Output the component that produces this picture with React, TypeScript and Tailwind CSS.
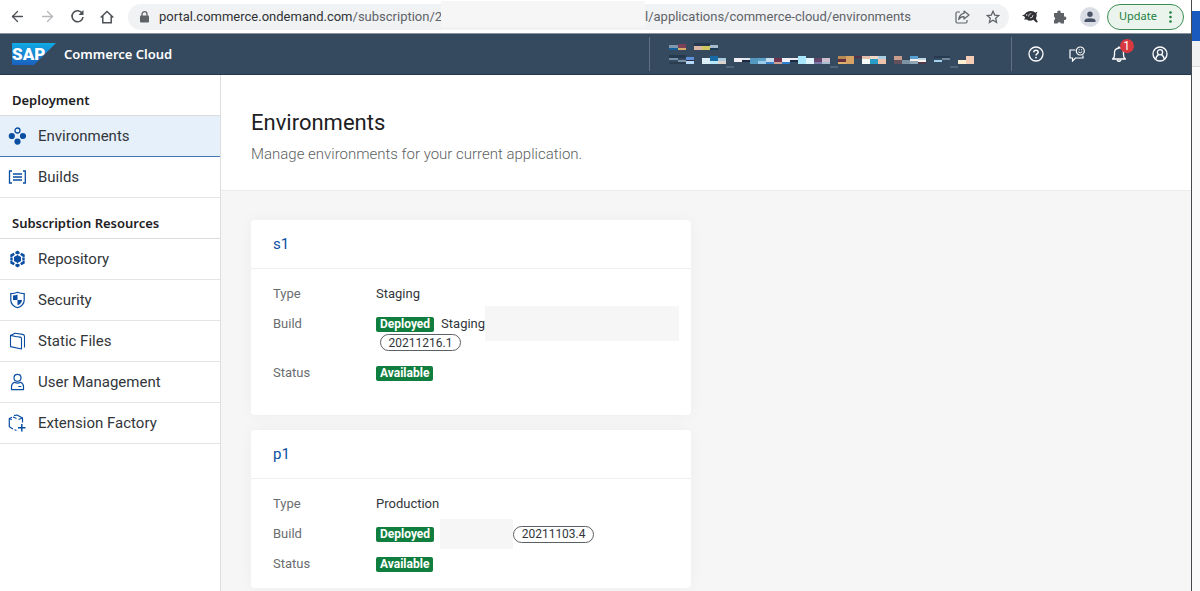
import { FunctionComponent, ReactNode } from "react";
import { ArrowLeft, ArrowRight } from "lucide-react";

interface NavItemProps {
    label: string;
    icon: ReactNode;
    active?: boolean;
}

interface EnvironmentCardProps {
    name: string;
    type: string;
    build: ReactNode;
    className?: string;
}

/* x, y, width, height, colour */
const userInfoCells: [number, number, number, number, string][] = [
    [0, 2, 9, 3, '#7f98b0'], [0, 5, 9, 2, '#12609b'],
    [9, 1, 8, 4, '#7a4259'], [9, 5, 8, 2, '#d8ac66'],
    [25, 0, 16, 3, '#24384e'], [25, 3, 8, 4, '#dcb8a8'], [33, 3, 8, 4, '#cfc95f'],
    [41, 2, 8, 3, '#a6bccb'], [41, 5, 8, 2, '#1a3a55'],
    [0, 12, 17, 3, '#24384e'], [0, 15, 9, 2, '#7790a8'], [9, 17, 8, 2, '#7790a8'], [0, 19, 17, 2, '#293c50'],
    [17, 14, 8, 3, '#5f8fd6'], [17, 17, 8, 1, '#2d2d48'], [17, 18, 8, 3, '#b5d9f7'],
    [33, 15, 8, 6, '#dceef8'], [41, 13, 8, 3, '#1769a5'], [41, 16, 8, 2, '#1769a5'], [41, 18, 8, 3, '#b9e6fb'],
    [49, 15, 8, 3, '#a9c9dc'], [49, 18, 8, 3, '#ddd3cd'], [57, 23, 8, 2, '#4f6475'],
    [65, 15, 8, 4, '#f1eef4'], [73, 15, 8, 2, '#e4e6ee'], [73, 17, 8, 2, '#1b2a43'],
    [81, 15, 8, 6, '#5598bf'], [89, 15, 8, 3, '#5aa0c8'], [89, 18, 8, 3, '#9bc9ea'],
    [97, 15, 8, 4, '#c7dcec'], [97, 19, 8, 2, '#3b82cc'], [105, 15, 8, 4, '#713551'], [105, 19, 8, 2, '#cda08f'],
    [113, 15, 8, 4, '#f0f1f6'], [113, 19, 8, 2, '#2c7fd2'], [121, 15, 8, 2, '#f0e9ef'], [121, 17, 8, 2, '#182b45'],
    [129, 13, 8, 8, '#a8e7fb'], [137, 15, 8, 6, '#e1f4fb'], [145, 15, 8, 4, '#63466b'], [145, 19, 8, 2, '#7a79aa'],
    [153, 15, 8, 4, '#cdbfd0'], [153, 19, 8, 2, '#a9bccf'], [161, 23, 8, 2, '#4f6475'],
    [169, 13, 8, 3, '#b38a52'], [169, 16, 8, 3, '#672d41'], [169, 19, 8, 2, '#e0b16c'], [177, 13, 8, 8, '#d6a365'],
    [185, 13, 8, 2, '#51324a'], [193, 13, 8, 3, '#e4bfae'], [193, 16, 8, 5, '#f4fbf8'],
    [201, 13, 8, 3, '#f3d7c7'], [201, 16, 8, 5, '#279cc4'], [209, 13, 8, 3, '#a9d0e2'], [209, 16, 8, 5, '#efc2ac'],
    [225, 13, 8, 4, '#c99d8e'], [225, 17, 8, 4, '#62505c'], [233, 17, 8, 4, '#7d94a3'],
    [241, 13, 8, 3, '#57a1d7'], [241, 16, 8, 2, '#f5f0e9'], [241, 18, 8, 3, '#91a8b8'],
    [249, 15, 8, 2, '#bfd6e4'], [249, 17, 8, 2, '#f9f2ed'], [249, 19, 8, 2, '#52384b'],
    [265, 13, 16, 2, '#263a50'], [265, 17, 8, 2, '#9ed2ef'], [273, 15, 8, 2, '#70869a'], [281, 23, 8, 2, '#4f6475'],
    [289, 17, 8, 4, '#fceed1'], [297, 13, 8, 8, '#f3cdb8'],
];

const EnvironmentsIcon = () => <svg width="18" height="18" viewBox="0 0 18 18" fill="#0a4ea2" aria-hidden="true">
    <circle cx="9.500" cy="3.500" r="2.500" fill="none" stroke="#0a4ea2" strokeWidth="1.300" />
    <circle cx="3.800" cy="9" r="3.100" />
    <circle cx="15" cy="9" r="3.100" />
    <circle cx="9.500" cy="14.600" r="3.100" />
</svg>

const BuildsIcon = () => <svg width="18" height="18" viewBox="0 0 18 18" fill="none" stroke="#0a4ea2" strokeWidth="1.300" aria-hidden="true">
    <path d="M4 3H1.500V15H4M15 3h2.300v12H15" />
    <path d="M5 6h9M5 9h9M5 12h9" strokeWidth="1.600" />
</svg>

const RepositoryIcon = () => <svg width="18" height="18" viewBox="0 0 18 18" fill="#0a4ea2" aria-hidden="true">
    <path d="M9.500 5l3.500 2v4l-3.500 2L6 11V7z" />
    <path d="M7.300 2l2.200-1.500L11.700 2v1.600l-2.200.9-2.200-.9zM7.300 16l2.200 1.500 2.200-1.500v-1.600l-2.200-.9-2.200.9z" />
    <path d="M2.300 4.400l3.300-1.700 1.300 2-3.300 2.600-1.300-.3zM16.700 4.400l-3.300-1.700-1.300 2 3.300 2.600 1.300-.3zM2.300 13.600l3.300 1.700 1.300-2-3.300-2.600-1.300.3zM16.700 13.600l-3.300 1.700-1.300-2 3.300-2.600 1.300.3z" />
    <path d="M2.300 7.600h2.400v2.800H2.300zM14.300 7.600h2.400v2.800h-2.400z" />
</svg>

const SecurityIcon = () => <svg width="18" height="18" viewBox="0 0 18 18" aria-hidden="true">
    <path d="M9.500 1.200c2 1 4.300 1.400 6.700 1.400V9c0 4-3 6.500-6.700 7.700C5.800 15.500 2.800 13 2.800 9V2.600C5.200 2.600 7.500 2.200 9.500 1.200z" fill="none" stroke="#0a4ea2" strokeWidth="1.200" />
    <path d="M5 4.500C6.500 4.400 8.200 4 9.500 3.500V9H5zM9.500 9H14c0 2.600-2 4.300-4.500 5.300z" fill="#0a4ea2" />
</svg>

const FilesIcon = () => <svg width="18" height="18" viewBox="0 0 18 18" fill="none" stroke="#0a4ea2" strokeWidth="1.100" strokeLinejoin="round" aria-hidden="true">
    <path d="M2.500 3.400L8.700 4.800Q13.500 4.600 13.500 6.500V17L2.500 14.600z" />
    <path d="M2.500 3.400L7 1.300 14.500 2.400Q16.500 2.700 16.500 4.500V15.500" />
</svg>

const UserIcon = () => <svg width="18" height="18" viewBox="0 0 18 18" fill="none" stroke="#0a4ea2" strokeWidth="1.200" strokeLinejoin="round" aria-hidden="true">
    <circle cx="9.500" cy="4.800" r="3.500" />
    <path d="M6.500 9.200C4.500 10 3.500 11.500 3.500 13.500V16.600H15.500V13.500C15.500 11.500 14.500 10 12.500 9.200Q9.500 11 6.500 9.200zM10.300 13.500h3" />
</svg>

const ExtensionIcon = () => <svg width="18" height="18" viewBox="0 0 18 18" fill="none" stroke="#0a4ea2" strokeWidth="1.200" strokeLinejoin="round" aria-hidden="true">
    <path d="M8.500 16.500L6.500 15.700M5 15L1.300 12.700V4.500L4 3.200M6 1.600L9 1l5.500 3V8.500" />
    <path d="M1.300 4.500L3.800 5.800M5 3l3.500 1.500M10.500 5.500L14.500 4" />
    <path d="M10 13.800H17.500M13.800 10V17.600" strokeWidth="1.500" />
</svg>

const BrowserBar = () => <header className="flex h-[34px] items-center border-b border-[#8b9099] bg-white pr-[7px] pl-2 text-[13px] text-[#5f6368]">
    <button aria-label="Back" className="w-[30px] pl-px text-[#4d5156]"><ArrowLeft size={17} strokeWidth={1.8} /></button>
    <button aria-label="Forward" className="w-[30px] pl-px text-[#b5b7ba]"><ArrowRight size={17} strokeWidth={1.8} /></button>
    <button aria-label="Reload" className="w-[30px] pl-0.5">
        <svg width="15" height="15" viewBox="0 0 15 15" fill="none" stroke="#4d5156" strokeWidth="1.600">
            <path d="M12.300 4.500A5.500 5.500 0 1 0 13 8" />
            <path d="M13.500 1v5h-5z" fill="#4d5156" stroke="none" />
        </svg>
    </button>
    <button aria-label="Home" className="w-[30px] pl-0.5">
        <svg width="14" height="14" viewBox="0 0 14 14" fill="none" stroke="#4d5156" strokeWidth="1.500">
            <path d="M.7 7.500L7 1.500l6.300 6M2.800 6V12.800H11.200V6" />
        </svg>
    </button>
    <div className="flex h-[26px] min-w-0 flex-1 items-center rounded-full bg-[#f0f2f4] pr-[9px] pl-3">
        <svg className="mr-[10px] shrink-0" width="9" height="12" viewBox="0 0 9 12" aria-hidden="true">
            <rect y="4.500" width="9" height="7" rx="1" fill="#5f6368" />
            <path d="M2 5V3.200a2.500 2.500 0 0 1 5 0V5" fill="none" stroke="#5f6368" strokeWidth="1.300" />
        </svg>
        <div className="flex w-[282px] shrink-0">
            <label htmlFor="path" className="text-[#303236]">portal.commerce.ondemand.com</label>
            <input id="path" readOnly value="/subscription/2" className="min-w-0 flex-1 outline-none" />
        </div>
        <span className="relative -top-[3px] h-[26px] w-[204px] shrink-0 bg-[#f6f6f6]" />
        <input aria-label="Page path" readOnly value="l/applications/commerce-cloud/environments" className="min-w-0 flex-1 outline-none" />
        <button aria-label="Share" className="mr-4">
            <svg width="15" height="14" viewBox="0 0 15 14" fill="none" stroke="#5f6368" strokeWidth="1.200" strokeLinejoin="round">
                <path d="M5 2H2.200Q1 2 1 3.200V11.800Q1 13 2.200 13H10.800Q12 13 12 11.800V10" />
                <path d="M9 1l5 4-5 4V6.700Q5.500 6.500 3.700 9.500 4.500 4 9 3.300z" />
            </svg>
        </button>
        <button aria-label="Bookmark">
            <svg width="14" height="14" viewBox="0 0 14 14" fill="none" stroke="#5f6368" strokeWidth="1.300">
                <path d="M7 1.300l1.700 3.800 4.100.4-3.100 2.800.9 4.100L7 10.300l-3.600 2.100.9-4.100L1.200 5.500l4.100-.4z" />
            </svg>
        </button>
    </div>
    <button aria-label="Search extension" className="ml-[13px]">
        <svg width="16" height="13" viewBox="0 0 16 13">
            <path d="M0 5.500L2.500 4.500Q4.500 1 9 1q3 0 4.500 1.800L15.500 1.500 14.500 4q.8 2.500-.6 4.500l2 3.500-1.600.5-3-2.700Q7.500 11.800 4.800 9.500L2 9.600l1.200-1.900Q2.500 6.600 2 6.300z" fill="#303134" />
            <path d="M6.500 6.500Q6.500 3.700 9.300 3.500M11 5Q11 8 8 8" fill="none" stroke="#c4c6ca" />
            <circle cx="4.700" cy="5" r=".7" fill="#fff" />
        </svg>
    </button>
    <button aria-label="Extensions" className="ml-[15px]">
        <svg width="14" height="14" viewBox="0 0 14 14" fill="#5f6368">
            <path d="M1.500 3H4.300A1.800 1.800 0 1 1 7.700 3H11v3.500a1.800 1.800 0 1 1 0 3.400V13.500H7.900a1.800 1.800 0 0 0-3.400 0H1V10.200a1.900 1.900 0 0 0 0-3.500V3z" />
        </svg>
    </button>
    <button aria-label="Profile" className="ml-[13px] flex size-5 items-center justify-center rounded-full bg-[#dadde4]">
        <svg width="12" height="12" viewBox="0 0 12 12" fill="#4a5468">
            <circle cx="6" cy="3.300" r="2.700" />
            <path d="M.5 11V9.500Q1 7.300 6 7.300T11.500 9.500V11z" />
        </svg>
    </button>
    <button className="ml-[7px] flex h-[26px] w-[77px] items-center justify-between rounded-full border border-[#3c8d55] bg-[#eaf4ec] pr-[11px] pl-[11px] font-['Noto_Sans',sans-serif] text-[11px] text-[#1e7f3e]">
        Update
        <svg width="3" height="12" viewBox="0 0 3 12" fill="#1e7f3e" aria-hidden="true">
            <circle cx="1.500" cy="1.500" r="1.300" />
            <circle cx="1.500" cy="6" r="1.300" />
            <circle cx="1.500" cy="10.500" r="1.300" />
        </svg>
    </button>
</header>

const ShellBar = () => <div className="flex h-[41px] items-center border-b border-[#24384e] bg-[#354a5f] pl-3 text-white">
    <svg width="44" height="22" viewBox="0 0 44 22" role="img" aria-label="SAP">
        <defs>
            <linearGradient id="logo" x1="0" y1="0" x2="0" y2="1">
                <stop offset="0" stopColor="#10abe5" />
                <stop offset="1" stopColor="#1b60c0" />
            </linearGradient>
        </defs>
        <path d="M0 0h44L22 22H0z" fill="url(#logo)" />
        <text x="0" y="17" fill="#fff" fontFamily="Roboto" fontWeight="900" fontSize="17">SAP</text>
    </svg>
    <h1 className="ml-2 flex-1 text-[13px] leading-5 font-semibold font-['Noto_Sans',sans-serif]">Commerce Cloud</h1>
    <div className="flex h-[34px] items-start border-x border-[#5f7183] pt-1.5 pr-9 pl-[19px]">
        <svg width="306" height="26" viewBox="0 0 306 26" aria-hidden="true" shapeRendering="crispEdges">
            {userInfoCells.map(([x, y, width, height, fill]) => <rect key={`${x}-${y}`} x={x} y={y} width={width} height={height} fill={fill} />)}
        </svg>
    </div>
    <div className="flex w-[179px] items-center justify-between pr-[23px] pl-4">
        <button aria-label="Help">
            <svg width="16" height="16" viewBox="0 0 16 16" fill="none" stroke="#fff" strokeWidth="1.300">
                <circle cx="8" cy="8" r="7" />
                <path d="M5.800 6.300Q5.900 4.300 8 4.300T10.200 6.200C10.200 7.700 8 7.700 8 9.600" strokeWidth="1.500" />
                <circle cx="8" cy="11.600" r=".9" fill="#fff" stroke="none" />
            </svg>
        </button>
        <button aria-label="Feedback">
            <svg width="16" height="16" viewBox="0 0 16 16" fill="none" stroke="#fff" strokeWidth="1.200">
                <path d="M6.500 4H1V12H3.500V15L6.500 12H14V9.500" />
                <circle cx="11.300" cy="5" r="4" />
                <path d="M9.300 5.800q2 2 4 0M9.700 3.800h1M12 3.800h1" strokeWidth="1" />
            </svg>
        </button>
        <button aria-label="Notifications" className="relative">
            <svg width="16" height="16" viewBox="0 0 16 16" fill="none" stroke="#fff" strokeWidth="1.300">
                <path d="M1.500 13Q3.500 12 3.500 9V6Q4 2.500 8 2t4.500 4V9q0 3 2 4z" strokeLinejoin="round" />
                <path d="M8 2V.5M6 14q2 2.500 4 0" strokeWidth="1.600" />
            </svg>
            <span className="absolute -top-[7px] left-[9px] flex size-[14px] items-center justify-center rounded-full bg-[#d8393f] text-[12px] leading-none">1</span>
        </button>
        <button aria-label="Account">
            <svg width="16" height="16" viewBox="0 0 16 16" fill="none" stroke="#fff" strokeWidth="1.300">
                <circle cx="8" cy="8" r="7" />
                <circle cx="8" cy="6.300" r="2.600" />
                <path d="M3.800 13Q4.500 9.500 6.500 9M12.200 13Q11.500 9.500 9.500 9" />
            </svg>
        </button>
    </div>
</div>

const NavItem: FunctionComponent<NavItemProps> = ({ label, icon, active }) => {
    return <li>
        <a href="#" className={active
            ? "flex h-[41px] items-center gap-3 border-b border-[#3f78b5] bg-[#e5f0fa] pl-2 text-[15px] text-[#32363a]"
            : "flex h-[41px] items-center gap-3 border-b border-[#e4e4e4] pl-2 text-[15px] text-[#32363a]"}>
            {icon}
            {label}
        </a>
    </li>
}

const NavHeading: FunctionComponent<{ children: ReactNode }> = ({ children }) => {
    return <h2 className="flex h-[41px] items-end border-b border-[#dcdcdc] pb-[5px] pl-3 text-[13px] leading-5 font-semibold font-['Noto_Sans',sans-serif] text-[#1d2023]">{children}</h2>
}

const Sidebar = () => <nav className="w-[221px] shrink-0 border-r border-[#dedede] bg-white">
    <NavHeading>Deployment</NavHeading>
    <ul>
        <NavItem label="Environments" icon={<EnvironmentsIcon />} active />
        <NavItem label="Builds" icon={<BuildsIcon />} />
    </ul>
    <NavHeading>Subscription Resources</NavHeading>
    <ul>
        <NavItem label="Repository" icon={<RepositoryIcon />} />
        <NavItem label="Security" icon={<SecurityIcon />} />
        <NavItem label="Static Files" icon={<FilesIcon />} />
        <NavItem label="User Management" icon={<UserIcon />} />
        <NavItem label="Extension Factory" icon={<ExtensionIcon />} />
    </ul>
</nav>

const StatusLabel: FunctionComponent<{ children: ReactNode }> = ({ children }) => {
    return <span className="inline-block h-[15px] rounded-xs bg-[#107e3e] px-1 text-[12px] leading-[15px] font-bold text-white">{children}</span>
}

const BuildNumber: FunctionComponent<{ children: ReactNode }> = ({ children }) => {
    return <span className="flex h-[17px] w-[81px] items-center justify-center rounded-full border border-[#5b6065] text-[12px]">{children}</span>
}

const EnvironmentCard: FunctionComponent<EnvironmentCardProps> = ({ name, type, build, className }) => {
    return <section className={className}>
        <h3 className="border-b border-[#efefef] py-3 pl-[22px] text-[15px] leading-6 text-[#0a4ea2]">
            <a href="#">{name}</a>
        </h3>
        <dl className="grid grid-cols-[103px_1fr] gap-y-[10px] pt-[15px] pr-3 pl-[22px] text-[13px] leading-5 text-[#32363a]">
            <dt className="text-[#6a6d70]">Type</dt>
            <dd>{type}</dd>
            <dt className="text-[#6a6d70]">Build</dt>
            <dd>{build}</dd>
            <dt className="text-[#6a6d70]">Status</dt>
            <dd className="flex items-center"><StatusLabel>Available</StatusLabel></dd>
        </dl>
    </section>
}

export default function App() {
    return <div className="flex min-h-screen bg-white font-['Roboto',sans-serif]">
        <div className="flex min-w-0 flex-1 flex-col border-r border-[#45494e]">
            <BrowserBar />
            <ShellBar />
            <div className="flex flex-1">
                <Sidebar />
                <main className="min-w-0 flex-1 bg-[#f6f6f6]">
                    <div className="border-b border-[#ebebeb] bg-white px-[30px] pt-8 pb-[25px]">
                        <h2 className="text-[22px] leading-8 text-[#1d2023]">Environments</h2>
                        <p className="mt-1 text-[15px] leading-[22px] font-light text-[#5c5f62]">Manage environments for your current application.</p>
                    </div>
                    <div className="grid grid-cols-2 gap-x-[30px] gap-y-[15px] px-[30px] pt-[29px] pb-[3px]">
                        <EnvironmentCard
                            name="s1"
                            type="Staging"
                            className="col-start-1 rounded-sm bg-white pb-8 shadow-[0_0_16px_rgba(0,0,0,0.04)]"
                            build={<div className="relative">
                                <div className="flex items-center gap-[7px]"><StatusLabel>Deployed</StatusLabel>Staging</div>
                                <div className="pb-0.5 pl-1"><BuildNumber>20211216.1</BuildNumber></div>
                                <span className="absolute -top-2 right-0 left-[109px] h-[35px] bg-[#f6f6f6]" />
                            </div>}
                        />
                        <EnvironmentCard
                            name="p1"
                            type="Production"
                            className="col-start-1 rounded-sm bg-white pb-[14px] shadow-[0_0_16px_rgba(0,0,0,0.04)]"
                            build={<div className="flex h-5 items-center">
                                <StatusLabel>Deployed</StatusLabel>
                                <span className="ml-[6px] h-[30px] w-[73px] bg-[#f6f6f6]" />
                                <BuildNumber>20211103.4</BuildNumber>
                            </div>}
                        />
                    </div>
                </main>
            </div>
        </div>
        {/* edge of the window behind */}
        <div className="flex w-2 shrink-0 flex-col bg-[#fafafa]">
            <div className="h-[11px] bg-white" />
            <div className="h-[30px] bg-[#1a59bd]" />
            <div className="h-[26px] border-b border-[#dadada] bg-[#f1f1f1]" />
        </div>
    </div>
}
